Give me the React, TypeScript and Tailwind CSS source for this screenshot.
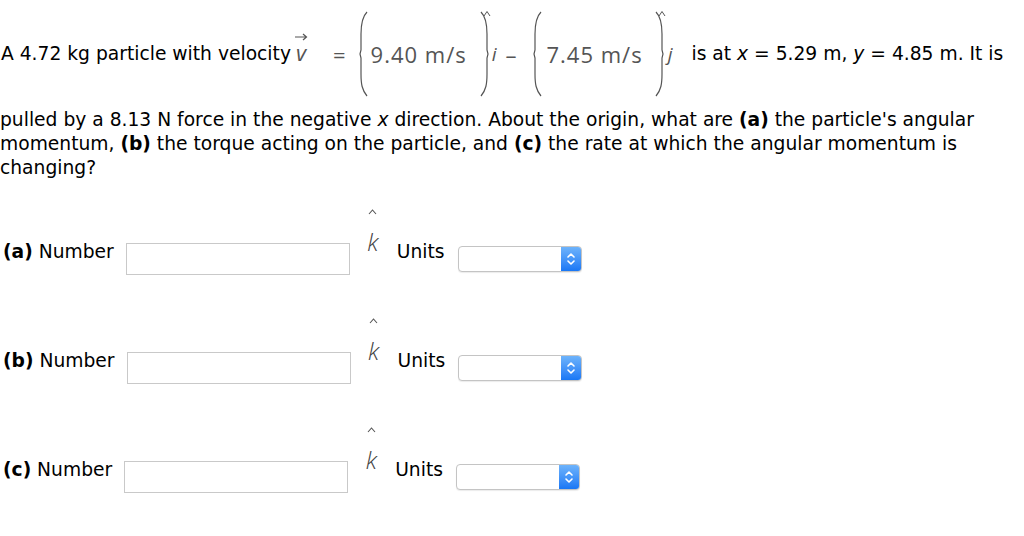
import React from "react";

function Bracket({ side, hat = false }: { side: "left" | "right"; hat?: boolean }) {
  const d =
    side === "left"
      ? "M9 2 C4 7 3 14 3 24 L3 40 L2 44 L3 48 L3 64 C3 74 4 80 9 86"
      : "M2 2 C7 7 8 14 8 24 L8 40 L9 44 L8 48 L8 64 C8 74 7 80 2 86";
  return (
    <svg width="12" height="88" viewBox="0 0 12 88" className="block shrink-0 overflow-visible">
      <path d={d} fill="none" stroke="#555" strokeWidth="1.2" />
      {hat && <path d="M5 6 L8 1.5 L11 6" fill="none" stroke="#555" strokeWidth="1" />}
    </svg>
  );
}

function VecV() {
  return (
    <span className="mb-[14px] ml-[4px] inline-flex w-[12px] flex-col items-center">
      <svg width="14" height="8" viewBox="0 0 14 8" className="mb-[2px] block">
        <path d="M1 4 L12 4 M9 1 L12.5 4 L9 7" fill="none" stroke="#555" strokeWidth="1.2" />
      </svg>
      <span className="italic leading-[18px]">v</span>
    </span>
  );
}

function Select() {
  return (
    <div className="ml-[13px] flex h-[26px] w-[124px] overflow-hidden rounded-[4px] border border-[#c4c4c4] bg-white shadow-[0_1px_1px_rgba(0,0,0,0.08)]">
      <div className="flex-1" />
      <div className="flex w-[20px] items-center justify-center bg-gradient-to-b from-[#6db3fb] to-[#1877f5]">
        <svg width="10" height="16" viewBox="0 0 10 16">
          <path d="M2 6 L5 3 L8 6 M2 10 L5 13 L8 10" fill="none" stroke="#fff" strokeWidth="1.6" strokeLinecap="round" strokeLinejoin="round" />
        </svg>
      </div>
    </div>
  );
}

function AnswerRow({ part }: { part: string }) {
  return (
    <div className="flex h-[109px] items-center">
      <span className="whitespace-nowrap pb-[12px] pl-[3px]">
        <b>({part})</b> Number
      </span>
      <input type="text" className="ml-[12px] h-[32px] w-[224px] border border-[#c9c9c9] bg-white outline-none" />
      <div className="ml-[13px] flex w-[20px] flex-col items-center self-start text-[#444]">
        <svg width="9" height="6" viewBox="0 0 9 6" className="mt-[5px] block">
          <path d="M1 5 L4.5 1 L8 5" fill="none" stroke="#555" strokeWidth="1.1" />
        </svg>
        <span className="mt-[14px] font-['Open_Sans',sans-serif] text-[24px] font-light italic leading-[26px]">k</span>
      </div>
      <span className="ml-[14px] pb-[12px]">Units</span>
      <Select />
    </div>
  );
}

export default function App() {
  return (
    <div className="min-h-screen w-full bg-white text-[18.7px] text-black font-['DejaVu_Sans',Verdana,sans-serif]">
      <div className="flex h-[108px] items-center whitespace-nowrap">
        <span className="pl-[1px]">A 4.72 kg particle with velocity</span>
        <div className="flex items-center font-['Open_Sans',sans-serif] text-[22px] text-[#555]">
          <VecV />
          <span className="ml-[26px]">=</span>
          <span className="ml-[12px]"><Bracket side="left" /></span>
          <span className="ml-[1px] tracking-[1px]">9.40 m/s</span>
          <span className="ml-[12px]"><Bracket side="right" hat /></span>
          <span className="ml-[1px] text-[19px] italic">i</span>
          <span className="ml-[9px]">–</span>
          <span className="ml-[15px]"><Bracket side="left" /></span>
          <span className="ml-[3px] tracking-[1px]">7.45 m/s</span>
          <span className="ml-[11px]"><Bracket side="right" hat /></span>
          <span className="ml-[2px] text-[19px] italic">j</span>
        </div>
        <span className="ml-[19px]">
          is at <i>x</i> = 5.29 m, <i>y</i> = 4.85 m. It is
        </span>
      </div>
      <p className="leading-[24px] whitespace-nowrap">
        pulled by a 8.13 N force in the negative <i>x</i> direction. About the origin, what are <b>(a)</b> the particle's angular
        <br />
        momentum, <b>(b)</b> the torque acting on the particle, and <b>(c)</b> the rate at which the angular momentum is
        <br />
        changing?
      </p>
      <div className="mt-[24px]">
        <AnswerRow part="a" />
        <AnswerRow part="b" />
        <AnswerRow part="c" />
      </div>
    </div>
  );
}
